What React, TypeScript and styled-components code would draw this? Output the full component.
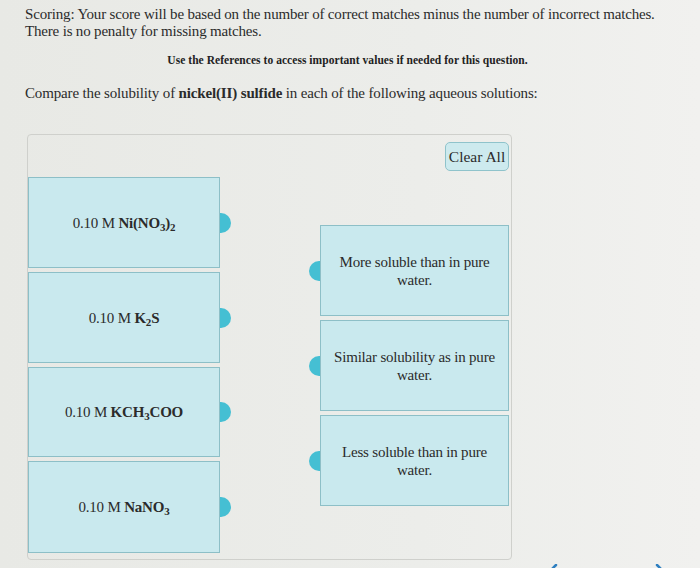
import React from "react";
import styled, { createGlobalStyle } from "styled-components";

const GlobalStyle = createGlobalStyle`
  html, body {
    margin: 0;
    padding: 0;
    background: linear-gradient(90deg, #e8e9e5 0%, #ecedea 60%, #f1f1ef 100%);
  }
  body {
    font-family: "Liberation Serif", "Times New Roman", serif;
    color: #2b2b2b;
  }
  sub {
    font-size: 11px;
    vertical-align: -3px;
    line-height: 0;
  }
`;

const Page = styled.div`
  width: 700px;
  height: 568px;
  overflow: hidden;
  box-sizing: border-box;
  padding: 6px 0 0 25px;
`;

const Intro = styled.p`
  margin: 0;
  font-size: 15px;
  line-height: 17px;
  letter-spacing: -0.18px;
`;

const Note = styled.p`
  margin: 14px 0 0 0;
  width: 645px;
  text-align: center;
  font-size: 11.5px;
  font-weight: bold;
  letter-spacing: 0.05px;
  color: #222;
`;

const Prompt = styled.p`
  margin: 19px 0 0 0;
  font-size: 15px;
  line-height: 17px;
  letter-spacing: -0.15px;
`;

const Panel = styled.div`
  margin: 32px 0 0 2px;
  width: 485px;
  height: 426px;
  box-sizing: border-box;
  border: 1px solid #cfd0cc;
  border-radius: 4px;
  padding: 7px 2px 0 0;
  display: flex;
  flex-direction: column;
`;

const Toolbar = styled.div`
  display: flex;
  justify-content: flex-end;
`;

const ClearButton = styled.button`
  width: 64px;
  height: 29px;
  box-sizing: border-box;
  border: 1px solid #8fc3cb;
  border-radius: 5px;
  background: #cdeaee;
  font-family: "Liberation Serif", "Times New Roman", serif;
  font-size: 15.5px;
  color: #2b2b2b;
  padding: 0;
`;

const Board = styled.div`
  margin-top: 6px;
  display: grid;
  grid-template-columns: 192px 189px;
  column-gap: 100px;
`;

const Column = styled.div<{ $offset: number }>`
  display: flex;
  flex-direction: column;
  gap: 4px;
  padding-top: ${(p) => p.$offset}px;
`;

const Card = styled.div<{ $h: number }>`
  position: relative;
  height: ${(p) => p.$h}px;
  box-sizing: border-box;
  border: 1px solid #8dbfc7;
  background: #c9e9ee;
  display: flex;
  align-items: center;
  justify-content: center;
  text-align: center;
  font-size: 15px;
  line-height: 18px;
  letter-spacing: -0.2px;
  padding: 0 9px;
`;

const Pin = styled.span<{ $side: "left" | "right" }>`
  position: absolute;
  top: 50%;
  width: 11px;
  height: 20px;
  margin-top: -10px;
  background: #45bfd3;
  ${(p) =>
    p.$side === "right"
      ? "right: -12px; border-radius: 0 10px 10px 0;"
      : "left: -12px; border-radius: 10px 0 0 10px;"}
`;

const Nav = styled.div`
  margin: 4px 0 0 523px;
  width: 117px;
  display: flex;
  justify-content: space-between;
`;

const Chevron = ({ dir }: { dir: "prev" | "next" }) => (
  <svg width="10" height="14" viewBox="0 0 10 14" aria-hidden="true">
    <path
      d={dir === "prev" ? "M8 1 L2 7 L8 13" : "M2 1 L8 7 L2 13"}
      fill="none"
      stroke="#2f7fc0"
      strokeWidth="2.5"
      strokeLinecap="round"
      strokeLinejoin="round"
    />
  </svg>
);

const sources: { label: React.ReactNode; h: number }[] = [
  {
    label: (
      <>
        0.10 M{" "}
        <b>
          Ni(NO<sub>3</sub>)<sub>2</sub>
        </b>
      </>
    ),
    h: 91,
  },
  {
    label: (
      <>
        0.10 M{" "}
        <b>
          K<sub>2</sub>S
        </b>
      </>
    ),
    h: 91,
  },
  {
    label: (
      <>
        0.10 M{" "}
        <b>
          KCH<sub>3</sub>COO
        </b>
      </>
    ),
    h: 90,
  },
  {
    label: (
      <>
        0.10 M{" "}
        <b>
          NaNO<sub>3</sub>
        </b>
      </>
    ),
    h: 92,
  },
];

const targets = [
  "More soluble than in pure water.",
  "Similar solubility as in pure water.",
  "Less soluble than in pure water.",
];

export default function App() {
  return (
    <>
      <GlobalStyle />
      <Page>
        <Intro>
          Scoring: Your score will be based on the number of correct matches minus the number of incorrect matches.
          <br />
          There is no penalty for missing matches.
        </Intro>
        <Note>Use the References to access important values if needed for this question.</Note>
        <Prompt>
          Compare the solubility of <b>nickel(II) sulfide</b> in each of the following aqueous solutions:
        </Prompt>
        <Panel>
          <Toolbar>
            <ClearButton>Clear All</ClearButton>
          </Toolbar>
          <Board>
            <Column $offset={0}>
              {sources.map((s, i) => (
                <Card key={i} $h={s.h}>
                  <span>{s.label}</span>
                  <Pin $side="right" />
                </Card>
              ))}
            </Column>
            <Column $offset={48}>
              {targets.map((t) => (
                <Card key={t} $h={91}>
                  <span>{t}</span>
                  <Pin $side="left" />
                </Card>
              ))}
            </Column>
          </Board>
        </Panel>
        <Nav>
          <Chevron dir="prev" />
          <Chevron dir="next" />
        </Nav>
      </Page>
    </>
  );
}
